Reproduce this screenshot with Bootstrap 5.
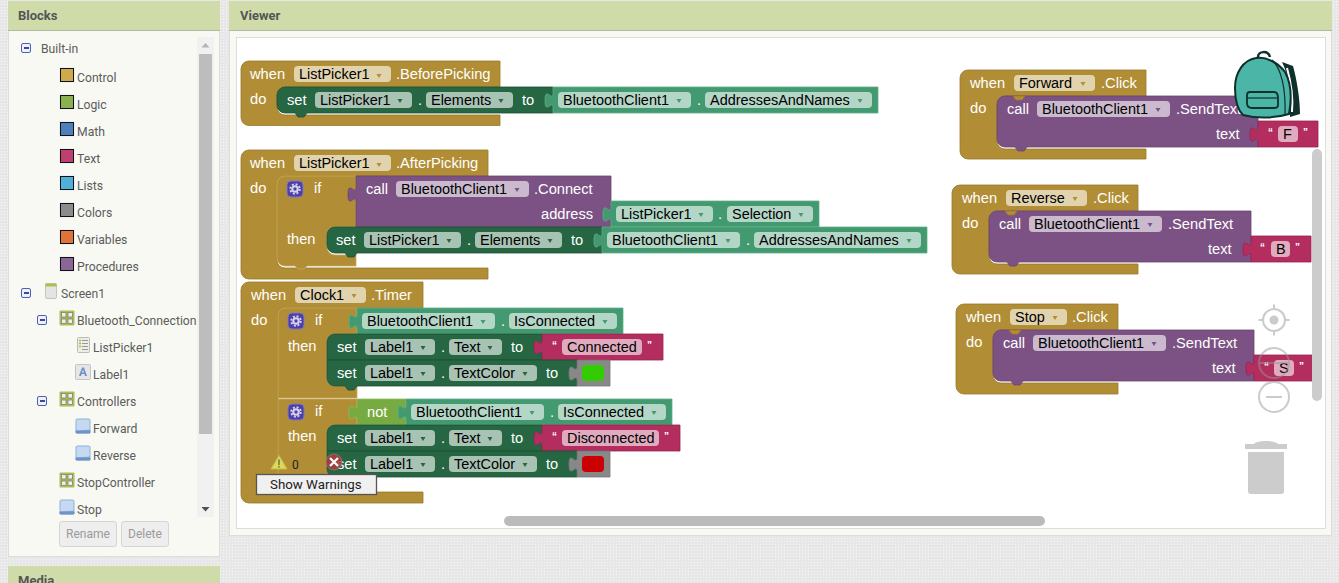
<!DOCTYPE html>
<html lang="en">
<head>
<meta charset="utf-8">
<title>Blocks</title>
<link href="https://cdn.jsdelivr.net/npm/bootstrap@5.3.0/dist/css/bootstrap.min.css" rel="stylesheet">
<style>
html,body{height:583px;overflow:hidden}
body{margin:0;background-color:#e7e7e7;background-image:radial-gradient(#f7f7f7 .8px,transparent .9px);background-size:3px 3px;font-family:Roboto,"Liberation Sans",sans-serif;font-size:12.2px;color:#5c5c5c}
.shell{padding:1px 7px 0 8px;gap:9px}
.side{width:212px;flex:none}
.viewer{flex:1 1 auto;min-width:0}
.phead{height:30px;background:#cfdcaa;border-bottom:1px solid #b4b9a3;padding:0 10px;font-weight:700;font-size:13px;line-height:29px;color:#555}
.viewer .phead{padding-left:11px}
.pbody{background:#f8f9f3;border:1px solid #ddd;border-top:0}
.sidebody{height:526px;padding-top:6px}
.treebox{height:480px;overflow:hidden;width:188px;flex:none;padding-top:1px}
.trow{height:27px;white-space:nowrap}
.trow svg{flex:none;margin-top:-6px}
.r0{height:22px;margin-bottom:4.5px;padding-left:12px}
.p-a{padding-left:12px}.p-b{padding-left:28px}.p-c{padding-left:50px}.p-d{padding-left:51px}.p-e{padding-left:66px}.p-f{padding-left:68px}
.tog{width:10px;height:10px;border:1px solid #4d5fb3;border-radius:2px;background:#eef0fa;flex:none;position:relative;margin-top:-2px}
.tog::after{content:"";position:absolute;left:1.5px;right:1.5px;top:3px;height:2px;background:#3b4a9a}
.sw{width:14px;height:14px;border:1px solid #111;box-shadow:0 0 0 1px #eef0f8;flex:none;margin-right:3px;margin-top:-6px}
.c1{background:#cdaa4b}.c2{background:#8ab14f}.c3{background:#4d80bd}.c4{background:#bf3f6f}.c5{background:#4fb0da}.c6{background:#8c8c8c}.c7{background:#df7439}.c8{background:#8b6596}
.ml-a{margin-left:10px}.ml-b{margin-left:14px}.ml-c{margin-left:12px}.mr-a{margin-right:2px}.mr-b{margin-right:3px}.mr-c{margin-right:4px}
.strack{width:17px;height:480px;background:#f1f1f1;flex:none;margin-left:0}
.sbtn{height:17px;flex:none}
.sthumb{height:380px;width:13px;background:#bdbdbd;margin:0 auto;flex:none}
.acts{padding:4px 0 0 50px;gap:4px}
.btn.act{--bs-btn-padding-x:6px;--bs-btn-padding-y:0;--bs-btn-font-size:12px;--bs-btn-bg:#eee;--bs-btn-border-color:#d5d5d5;--bs-btn-color:#999;--bs-btn-border-radius:3px;--bs-btn-disabled-bg:#eee;--bs-btn-disabled-border-color:#d5d5d5;--bs-btn-disabled-color:#9a9a9a;--bs-btn-disabled-opacity:1;height:26px;line-height:24px}
.b-ren{width:58px}.b-del{width:48px}
.mediahead{margin-top:9px}
.viewbody{height:505px;padding:6px}
.canvasbox{width:1090px;height:492px;background:#fff;border:1px solid #ddd;overflow:hidden}
.canvasbox svg{display:block}
.ws text{font-family:"Liberation Sans",Arial,sans-serif;font-size:14.67px}
.ws text.k{font-size:14.45px}
.w{fill:#fff}.k{fill:#000}
.gold{fill:#b18e35;stroke:#9a7a2b;stroke-width:.8}
.goldi{fill:#b18e35;stroke:#c6aa5d;stroke-width:.8}
.dg{fill:#266643;stroke:#1d5236;stroke-width:.8}
.vg{fill:#439970;stroke:#5fb08a;stroke-width:.8}
.pu{fill:#7c5285;stroke:#694570;stroke-width:.8}
.pk{fill:#b32d5e;stroke:#982450;stroke-width:.8}
.gy{fill:#888;stroke:#777;stroke-width:.8}
.ol{fill:#77ab41;stroke:#8fbb5f;stroke-width:.8}
.f-g{fill:#e0d3ae}.f-d{fill:#a8c2b4}.f-v{fill:#b4d6c6}.f-p{fill:#cbbace}.f-k{fill:#e0abbf}
.t-g{fill:#b18e35}.t-d{fill:#266643}.t-v{fill:#439970}.t-p{fill:#7c5285}
.ws text.q{font-size:10px;font-weight:700}
.ws text.n0{font-family:Roboto,sans-serif;font-size:12px;fill:#222}
.ws text.bw{font-family:Roboto,sans-serif;font-size:13.3px;fill:#222}
.ctl{fill:none;stroke:#999;stroke-width:2}
.ctf{fill:#999}
.ctlg{opacity:.5}
.trash{fill:#ccc}
.sb1{fill:#ccc}.sb2{fill:#bbb}
</style>
</head>
<body>
<svg width="0" height="0" class="position-absolute">
<defs>
<symbol id="ic-arr" viewBox="0 0 16 16"><rect x=".5" y=".5" width="15" height="15" rx="1" fill="#a9c24f"/><rect x="2.500" y="2.500" width="4.500" height="4.500" fill="#eee" stroke="#777" stroke-width=".7"/><rect x="9" y="2.500" width="4.500" height="4.500" fill="#eee" stroke="#777" stroke-width=".7"/><rect x="2.500" y="9" width="4.500" height="4.500" fill="#eee" stroke="#777" stroke-width=".7"/><rect x="9" y="9" width="4.500" height="4.500" fill="#eee" stroke="#777" stroke-width=".7"/></symbol>
<symbol id="ic-btn" viewBox="0 0 16 16"><rect x=".5" y=".5" width="15" height="15" rx="2" fill="#8fb0dc"/><path d="M1.500 1.500h13v10l-13 1z" fill="#c6d9f1"/><rect x=".5" y="12.500" width="15" height="3" rx="1" fill="#6e93c9"/></symbol>
<path id="tr" d="M0.500,1h5l-2.500,4z"/>
<g id="gear"><rect x=".5" y=".5" width="16" height="16" rx="4" fill="#4c3fa6" stroke="#8177c4"/><circle cx="8.500" cy="8.500" r="3.800" fill="#d8d3ee"/><circle cx="8.500" cy="8.500" r="4.800" fill="none" stroke="#d8d3ee" stroke-width="1.800" stroke-dasharray="2 1.770"/><circle cx="8.500" cy="8.500" r="1.700" fill="#4c3fa6"/></g>
</defs>
</svg>
<div class="shell d-flex">
  <div class="side">
    <div class="phead">Blocks</div>
    <div class="pbody sidebody">
      <div class="d-flex">
        <div class="treebox">
          <div class="trow r0 d-flex align-items-center"><span class="tog"></span><span class="ml-a">Built-in</span></div>
          <div class="trow p-d d-flex align-items-center"><span class="sw c1"></span>Control</div>
          <div class="trow p-d d-flex align-items-center"><span class="sw c2"></span>Logic</div>
          <div class="trow p-d d-flex align-items-center"><span class="sw c3"></span>Math</div>
          <div class="trow p-d d-flex align-items-center"><span class="sw c4"></span>Text</div>
          <div class="trow p-d d-flex align-items-center"><span class="sw c5"></span>Lists</div>
          <div class="trow p-d d-flex align-items-center"><span class="sw c6"></span>Colors</div>
          <div class="trow p-d d-flex align-items-center"><span class="sw c7"></span>Variables</div>
          <div class="trow p-d d-flex align-items-center"><span class="sw c8"></span>Procedures</div>
          <div class="trow p-a d-flex align-items-center"><span class="tog"></span>
            <svg class="ml-b mr-c" width="12" height="16" viewBox="0 0 12 16"><rect x=".5" y=".5" width="11" height="15" rx="1.500" fill="#e4e4e4" stroke="#c4c4c4"/><rect x=".5" y=".5" width="11" height="3" fill="#a9c24f"/></svg>Screen1</div>
          <div class="trow p-b d-flex align-items-center"><span class="tog"></span>
            <svg class="ml-c mr-a" width="16" height="16"><use href="#ic-arr"/></svg>Bluetooth_Connection</div>
          <div class="trow p-f d-flex align-items-center">
            <svg class="mr-b" width="13" height="16" viewBox="0 0 13 16"><rect x=".5" y=".5" width="12" height="15" rx="1" fill="#eceee2" stroke="#bbb"/><path d="M2 3.500h2M2 6.500h2M2 9.500h2" stroke="#a2bd45" stroke-width="1.400"/><path d="M5 3.500h6M5 6.500h6M5 9.500h6M5 12.500h6" stroke="#999"/></svg>ListPicker1</div>
          <div class="trow p-e d-flex align-items-center">
            <svg class="mr-a" width="16" height="16" viewBox="0 0 16 16"><rect x=".5" y=".5" width="15" height="15" rx="1" fill="#e6e6e6" stroke="#c4c4c4"/><path d="M4 12 7 3.500h2L12 12h-2l-.6-2H6.600L6 12zM7 8.500h2L8 5.500z" fill="#6f92c8"/></svg>Label1</div>
          <div class="trow p-b d-flex align-items-center"><span class="tog"></span>
            <svg class="ml-c mr-a" width="16" height="16"><use href="#ic-arr"/></svg>Controllers</div>
          <div class="trow p-e d-flex align-items-center"><svg class="mr-a" width="16" height="16"><use href="#ic-btn"/></svg>Forward</div>
          <div class="trow p-e d-flex align-items-center"><svg class="mr-a" width="16" height="16"><use href="#ic-btn"/></svg>Reverse</div>
          <div class="trow p-c d-flex align-items-center"><svg class="mr-a" width="16" height="16"><use href="#ic-arr"/></svg>StopController</div>
          <div class="trow p-c d-flex align-items-center"><svg class="mr-a" width="16" height="16"><use href="#ic-btn"/></svg>Stop</div>
        </div>
        <div class="strack d-flex flex-column">
          <svg class="sbtn" width="17" height="17" viewBox="0 0 17 17"><path d="M4.500 10.500 8.500 6l4 4.500z" fill="#b5b5b5"/></svg>
          <div class="sthumb"></div>
          <div class="flex-grow-1"></div>
          <svg class="sbtn" width="17" height="17" viewBox="0 0 17 17"><path d="M4.500 7h8l-4 4.500z" fill="#505050"/></svg>
        </div>
      </div>
      <div class="acts d-flex">
        <button type="button" class="btn act b-ren p-0" disabled>Rename</button>
        <button type="button" class="btn act b-del p-0" disabled>Delete</button>
      </div>
    </div>
    <div class="phead mediahead">Media</div>
  </div>
  <div class="viewer">
    <div class="phead">Viewer</div>
    <div class="pbody viewbody">
      <div class="canvasbox">
<svg class="ws" width="1088" height="490" viewBox="237 38 1088 490">
<!-- BeforePicking -->
<path class="gold" d="M249,61H500V87H285a8,8 0 0 0 -8,8V107a8,8 0 0 0 8,8H500V125.500H249a8,8 0 0 1 -8,-8V69a8,8 0 0 1 8,-8z"/>
<path class="dg" d="M285,87H553V113H307l-3,4h-6l-3,-4H285a8,8 0 0 1 -8,-8V95a8,8 0 0 1 8,-8z"/>
<path class="vg" d="M553,87H878V113H553V108c0,-10 -8,8 -8,-7.500s8,2.500 8,-7.500z"/>
<text class="w" x="250" y="79">when</text><rect class="f-g" x="294" y="66" width="97" height="16" rx="4"/><text class="k" x="299" y="79">ListPicker1</text><use href="#tr" class="t-g" x="376" y="73"/><text class="w" x="396" y="79">.BeforePicking</text>
<text class="w" x="250" y="104">do</text><text class="w" x="287" y="105">set</text>
<rect class="f-d" x="315" y="92" width="97" height="16" rx="4"/><text class="k" x="320" y="105">ListPicker1</text><use href="#tr" class="t-d" x="397" y="98"/><text class="w" x="418" y="105">.</text>
<rect class="f-d" x="426" y="92" width="87" height="16" rx="4"/><text class="k" x="431" y="105">Elements</text><use href="#tr" class="t-d" x="498" y="98"/><text class="w" x="522" y="105">to</text>
<rect class="f-v" x="558" y="92" width="133" height="16" rx="4"/><text class="k" x="563" y="105">BluetoothClient1</text><use href="#tr" class="t-v" x="676" y="98"/><text class="w" x="697" y="105">.</text>
<rect class="f-v" x="705" y="92" width="167" height="16" rx="4"/><text class="k" x="710" y="105">AddressesAndNames</text><use href="#tr" class="t-v" x="857" y="98"/>
<!-- AfterPicking -->
<path class="gold" d="M249,150H488V176H285a8,8 0 0 0 -8,8V260a8,8 0 0 0 8,8H488V279H249a8,8 0 0 1 -8,-8V158a8,8 0 0 1 8,-8z"/>
<path class="goldi" d="M285,176H356V227H335a8,8 0 0 0 -8,8V247a8,8 0 0 0 8,8H356V266H307l-3,3h-6l-3,-3H285a8,8 0 0 1 -8,-8V184a8,8 0 0 1 8,-8z"/>
<path class="pu" d="M356,176H611V227H356V202c0,-10 -8,8 -8,-7.500s8,2.500 8,-7.500z"/>
<path class="vg" d="M611,201H819V227H611V222c0,-10 -8,8 -8,-7.500s8,2.500 8,-7.500z"/>
<path class="dg" d="M335,227H602V253H357l-3,4h-6l-3,-4H335a8,8 0 0 1 -8,-8V235a8,8 0 0 1 8,-8z"/>
<path class="vg" d="M602,227H927V253H602V248c0,-10 -8,8 -8,-7.500s8,2.500 8,-7.500z"/>
<text class="w" x="250" y="168">when</text><rect class="f-g" x="294" y="155" width="97" height="16" rx="4"/><text class="k" x="299" y="168">ListPicker1</text><use href="#tr" class="t-g" x="376" y="162"/><text class="w" x="396" y="168">.AfterPicking</text>
<text class="w" x="250" y="193">do</text>
<use href="#gear" x="286.500" y="180.500"/>
<text class="w" x="314" y="193">if</text>
<text class="w" x="366" y="194">call</text><rect class="f-p" x="396" y="181" width="133" height="16" rx="4"/><text class="k" x="401" y="194">BluetoothClient1</text><use href="#tr" class="t-p" x="514" y="187"/><text class="w" x="534" y="194">.Connect</text>
<text class="w" x="541" y="219">address</text>
<rect class="f-v" x="616" y="206" width="97" height="16" rx="4"/><text class="k" x="621" y="219">ListPicker1</text><use href="#tr" class="t-v" x="698" y="212"/><text class="w" x="718" y="219">.</text>
<rect class="f-v" x="727" y="206" width="86" height="16" rx="4"/><text class="k" x="732" y="219">Selection</text><use href="#tr" class="t-v" x="798" y="212"/>
<text class="w" x="287" y="244">then</text><text class="w" x="336" y="245">set</text>
<rect class="f-d" x="364" y="232" width="97" height="16" rx="4"/><text class="k" x="369" y="245">ListPicker1</text><use href="#tr" class="t-d" x="446" y="238"/><text class="w" x="467" y="245">.</text>
<rect class="f-d" x="475" y="232" width="87" height="16" rx="4"/><text class="k" x="480" y="245">Elements</text><use href="#tr" class="t-d" x="547" y="238"/><text class="w" x="571" y="245">to</text>
<rect class="f-v" x="607" y="232" width="133" height="16" rx="4"/><text class="k" x="612" y="245">BluetoothClient1</text><use href="#tr" class="t-v" x="725" y="238"/><text class="w" x="746" y="245">.</text>
<rect class="f-v" x="754" y="232" width="167" height="16" rx="4"/><text class="k" x="759" y="245">AddressesAndNames</text><use href="#tr" class="t-v" x="906" y="238"/>
<!-- Clock1.Timer -->
<path class="gold" d="M249,282H423V308H286a8,8 0 0 0 -8,8V484a8,8 0 0 0 8,8H423V503H249a8,8 0 0 1 -8,-8V290a8,8 0 0 1 8,-8z"/>
<path class="goldi" d="M286,308H357V334H335a8,8 0 0 0 -8,8V378a8,8 0 0 0 8,8H357V398H278V316a8,8 0 0 1 8,-8z"/>
<path class="goldi" d="M278,399H357V425H335a8,8 0 0 0 -8,8V469a8,8 0 0 0 8,8H357V484H286a8,8 0 0 1 -8,-8z"/>
<path class="vg" d="M357,308H623V334H357V329c0,-10 -8,8 -8,-7.500s8,2.500 8,-7.500z"/>
<path class="dg" d="M335,334H542V360H327V342a8,8 0 0 1 8,-8z"/>
<path class="pk" d="M542,334H663V360H542V355c0,-10 -8,8 -8,-7.500s8,2.500 8,-7.500z"/>
<path class="dg" d="M327,360H577V386H357l-3,4h-6l-3,-4H335a8,8 0 0 1 -8,-8z"/>
<path class="gy" d="M577,360H610V386H577V381c0,-10 -8,8 -8,-7.500s8,2.500 8,-7.500z"/>
<rect x="582" y="365" width="22" height="16" rx="4" fill="#33cc00"/>
<path class="ol" d="M357,399H406V425H357V420c0,-10 -8,8 -8,-7.500s8,2.500 8,-7.500z"/>
<path class="vg" d="M406,399H672V425H406V420c0,-10 -8,8 -8,-7.500s8,2.500 8,-7.500z"/>
<path class="dg" d="M335,425H542V451H327V433a8,8 0 0 1 8,-8z"/>
<path class="pk" d="M542,425H680V451H542V446c0,-10 -8,8 -8,-7.500s8,2.500 8,-7.500z"/>
<path class="dg" d="M327,451H577V477H335a8,8 0 0 1 -8,-8z"/>
<path class="gy" d="M577,451H610V477H577V472c0,-10 -8,8 -8,-7.500s8,2.500 8,-7.500z"/>
<rect x="582" y="456" width="22" height="16" rx="4" fill="#cc0000"/>
<text class="w" x="251" y="300">when</text><rect class="f-g" x="295" y="287" width="71" height="16" rx="4"/><text class="k" x="300" y="300">Clock1</text><use href="#tr" class="t-g" x="351" y="293"/><text class="w" x="371" y="300">.Timer</text>
<text class="w" x="251" y="325">do</text>
<use href="#gear" x="287.500" y="312.500"/>
<text class="w" x="315" y="325">if</text>
<rect class="f-v" x="362" y="313" width="133" height="16" rx="4"/><text class="k" x="367" y="326">BluetoothClient1</text><use href="#tr" class="t-v" x="480" y="319"/><text class="w" x="501" y="326">.</text>
<rect class="f-v" x="509" y="313" width="108" height="16" rx="4"/><text class="k" x="514" y="326">IsConnected</text><use href="#tr" class="t-v" x="602" y="319"/>
<text class="w" x="288" y="351">then</text><text class="w" x="337" y="352">set</text>
<rect class="f-d" x="365" y="339" width="70" height="16" rx="4"/><text class="k" x="370" y="352">Label1</text><use href="#tr" class="t-d" x="420" y="345"/><text class="w" x="441" y="352">.</text>
<rect class="f-d" x="449" y="339" width="53" height="16" rx="4"/><text class="k" x="454" y="352">Text</text><use href="#tr" class="t-d" x="487" y="345"/><text class="w" x="511" y="352">to</text>
<text class="w q" x="552" y="349">“</text><rect class="f-k" x="562" y="339" width="80" height="16" rx="4"/><text class="k" x="567" y="352">Connected</text><text class="w q" x="647" y="349">”</text>
<text class="w" x="337" y="378">set</text>
<rect class="f-d" x="365" y="365" width="70" height="16" rx="4"/><text class="k" x="370" y="378">Label1</text><use href="#tr" class="t-d" x="420" y="371"/><text class="w" x="441" y="378">.</text>
<rect class="f-d" x="449" y="365" width="88" height="16" rx="4"/><text class="k" x="454" y="378">TextColor</text><use href="#tr" class="t-d" x="522" y="371"/><text class="w" x="546" y="378">to</text>
<use href="#gear" x="287.500" y="403.500"/>
<text class="w" x="315" y="416">if</text><text class="w" x="367" y="417">not</text>
<rect class="f-v" x="411" y="404" width="133" height="16" rx="4"/><text class="k" x="416" y="417">BluetoothClient1</text><use href="#tr" class="t-v" x="529" y="410"/><text class="w" x="550" y="417">.</text>
<rect class="f-v" x="558" y="404" width="108" height="16" rx="4"/><text class="k" x="563" y="417">IsConnected</text><use href="#tr" class="t-v" x="651" y="410"/>
<text class="w" x="288" y="441">then</text><text class="w" x="337" y="443">set</text>
<rect class="f-d" x="365" y="430" width="70" height="16" rx="4"/><text class="k" x="370" y="443">Label1</text><use href="#tr" class="t-d" x="420" y="436"/><text class="w" x="441" y="443">.</text>
<rect class="f-d" x="449" y="430" width="53" height="16" rx="4"/><text class="k" x="454" y="443">Text</text><use href="#tr" class="t-d" x="487" y="436"/><text class="w" x="511" y="443">to</text>
<text class="w q" x="552" y="440">“</text><rect class="f-k" x="562" y="430" width="97" height="16" rx="4"/><text class="k" x="567" y="443">Disconnected</text><text class="w q" x="664" y="440">”</text>
<text class="w" x="337" y="469">set</text>
<rect class="f-d" x="365" y="456" width="70" height="16" rx="4"/><text class="k" x="370" y="469">Label1</text><use href="#tr" class="t-d" x="420" y="462"/><text class="w" x="441" y="469">.</text>
<rect class="f-d" x="449" y="456" width="88" height="16" rx="4"/><text class="k" x="454" y="469">TextColor</text><use href="#tr" class="t-d" x="522" y="462"/><text class="w" x="546" y="469">to</text>
<!-- warning + error -->
<path d="M279,455.500 287,469H271z" fill="#dcd85a" stroke="#c6bd45" stroke-linejoin="round"/><path d="M279,459.500v5.500M279,466v1.500" stroke="#555" stroke-width="1.200"/>
<text class="n0" x="292" y="469">0</text>
<circle cx="334" cy="462" r="8" fill="#b23a3f" stroke="#8e8a80" stroke-width=".8" opacity=".85"/><path d="M330,458l8,8M338,458l-8,8" stroke="#fff" stroke-width="2.200"/>
<rect x="256.500" y="474.500" width="120" height="20" fill="#f0f0f0" stroke="#555" stroke-width="1.300"/>
<text class="bw" x="270" y="489">Show Warnings</text>
<!-- Forward -->
<path class="gold" d="M968,70H1146V96H1005a8,8 0 0 0 -8,8V141a8,8 0 0 0 8,8H1146V159H968a8,8 0 0 1 -8,-8V78a8,8 0 0 1 8,-8z"/>
<path class="pu" d="M1005,96H1258V147H1027l-3,4h-6l-3,-4H1005a8,8 0 0 1 -8,-8V104a8,8 0 0 1 8,-8z"/>
<path class="gold" d="M1013,96l3,4h6l3,-4z"/>
<path class="pk" d="M1258,121H1318V147H1258V142c0,-10 -8,8 -8,-7.500s8,2.500 8,-7.500z"/>
<text class="w" x="970" y="88">when</text><rect class="f-g" x="1014" y="75" width="81" height="16" rx="4"/><text class="k" x="1019" y="88">Forward</text><use href="#tr" class="t-g" x="1080" y="81"/><text class="w" x="1101" y="88">.Click</text>
<text class="w" x="970" y="113">do</text><text class="w" x="1007" y="114">call</text>
<rect class="f-p" x="1037" y="101" width="133" height="16" rx="4"/><text class="k" x="1042" y="114">BluetoothClient1</text><use href="#tr" class="t-p" x="1155" y="107"/><text class="w" x="1176" y="114">.SendText</text>
<text class="w" x="1216" y="139">text</text>
<text class="w q" x="1268" y="136">“</text><rect class="f-k" x="1278" y="126" width="20" height="16" rx="4"/><text class="k" x="1283" y="139">F</text><text class="w q" x="1303" y="136">”</text>
<!-- Reverse -->
<path class="gold" d="M960,185H1138V211H997a8,8 0 0 0 -8,8V256a8,8 0 0 0 8,8H1138V274H960a8,8 0 0 1 -8,-8V193a8,8 0 0 1 8,-8z"/>
<path class="pu" d="M997,211H1251V262H1019l-3,4h-6l-3,-4H997a8,8 0 0 1 -8,-8V219a8,8 0 0 1 8,-8z"/>
<path class="gold" d="M1005,211l3,4h6l3,-4z"/>
<path class="pk" d="M1251,236H1311V262H1251V257c0,-10 -8,8 -8,-7.500s8,2.500 8,-7.500z"/>
<text class="w" x="962" y="203">when</text><rect class="f-g" x="1006" y="190" width="81" height="16" rx="4"/><text class="k" x="1011" y="203">Reverse</text><use href="#tr" class="t-g" x="1072" y="196"/><text class="w" x="1093" y="203">.Click</text>
<text class="w" x="962" y="228">do</text><text class="w" x="999" y="229">call</text>
<rect class="f-p" x="1029" y="216" width="133" height="16" rx="4"/><text class="k" x="1034" y="229">BluetoothClient1</text><use href="#tr" class="t-p" x="1147" y="222"/><text class="w" x="1168" y="229">.SendText</text>
<text class="w" x="1208" y="254">text</text>
<text class="w q" x="1260" y="251">“</text><rect class="f-k" x="1271" y="241" width="19" height="16" rx="4"/><text class="k" x="1276" y="254">B</text><text class="w q" x="1295" y="251">”</text>
<!-- Stop -->
<path class="gold" d="M964,304H1118V330H1001a8,8 0 0 0 -8,8V375a8,8 0 0 0 8,8H1118V394H964a8,8 0 0 1 -8,-8V312a8,8 0 0 1 8,-8z"/>
<path class="pu" d="M1001,330H1254V381H1023l-3,4h-6l-3,-4H1001a8,8 0 0 1 -8,-8V338a8,8 0 0 1 8,-8z"/>
<path class="gold" d="M1009,330l3,4h6l3,-4z"/>
<path class="pk" d="M1254,355H1314V381H1254V376c0,-10 -8,8 -8,-7.500s8,2.500 8,-7.500z"/>
<text class="w" x="966" y="322">when</text><rect class="f-g" x="1010" y="309" width="57" height="16" rx="4"/><text class="k" x="1015" y="322">Stop</text><use href="#tr" class="t-g" x="1052" y="315"/><text class="w" x="1072" y="322">.Click</text>
<text class="w" x="966" y="347">do</text><text class="w" x="1003" y="348">call</text>
<rect class="f-p" x="1033" y="335" width="133" height="16" rx="4"/><text class="k" x="1038" y="348">BluetoothClient1</text><use href="#tr" class="t-p" x="1151" y="341"/><text class="w" x="1172" y="348">.SendText</text>
<text class="w" x="1212" y="373">text</text>
<text class="w q" x="1264" y="370">“</text><rect class="f-k" x="1274" y="360" width="20" height="16" rx="4"/><text class="k" x="1279" y="373">S</text><text class="w q" x="1299" y="370">”</text>
<!-- backpack -->
<path d="M1282,62 1293,66C1297,80 1300,100 1300,114L1290,117C1290,95 1289,75 1282,62z" fill="#0f302b"/>
<path d="M1287,68C1291,82 1293,100 1292,112" fill="none" stroke="#fff" stroke-width="2"/>
<path d="M1258,57C1258,51 1268,50 1270,57" fill="none" stroke="#0f302b" stroke-width="2.500"/>
<path d="M1256,58C1243,60 1235,73 1235,88C1235,101 1238,110 1243,115C1258,119 1276,118 1289,114C1292,98 1291,83 1285,72C1279,64 1267,56 1256,58z" fill="#4bb5a8" stroke="#0f302b" stroke-width="2"/>
<path d="M1272,60C1281,68 1286,88 1285,115" fill="none" stroke="#0f302b" stroke-width="1.200"/>
<path d="M1250,92H1274C1277,92 1278,94 1278,98V105C1278,107 1276,108 1274,108H1252C1249,108 1247,106 1247,103V95C1247,93 1248,92 1250,92z" fill="#4bb5a8" stroke="#0f302b" stroke-width="1.800"/>
<path d="M1248,98H1277" stroke="#0f302b" stroke-width="1.200"/>
<!-- scrollbars -->
<rect class="sb1" x="1312" y="149" width="10" height="252" rx="5"/>
<rect class="sb2" x="504" y="516" width="541" height="10" rx="5"/>
<!-- controls -->
<g class="ctlg">
<circle class="ctl" cx="1274" cy="320" r="11"/><circle class="ctf" cx="1274" cy="320" r="4.500"/><path class="ctl" d="M1274,304.500v4M1274,331.500v4M1258.500,320h4M1285.500,320h4"/>
<circle class="ctl" cx="1274" cy="363" r="15"/><path class="ctl" d="M1259,363h30"/>
<circle class="ctl" cx="1274" cy="397" r="15"/><path class="ctl" d="M1266,397h16"/>
</g>
<path class="trash" d="M1245,449V444H1254C1256,440 1276,440 1278,444H1287V449z"/><path class="trash" d="M1248,452H1284V491a3,3 0 0 1 -3,3H1251a3,3 0 0 1 -3,-3z"/>
</svg>
      </div>
    </div>
  </div>
</div>
<script src="https://cdn.jsdelivr.net/npm/bootstrap@5.3.0/dist/js/bootstrap.bundle.min.js"></script>
</body>
</html>
